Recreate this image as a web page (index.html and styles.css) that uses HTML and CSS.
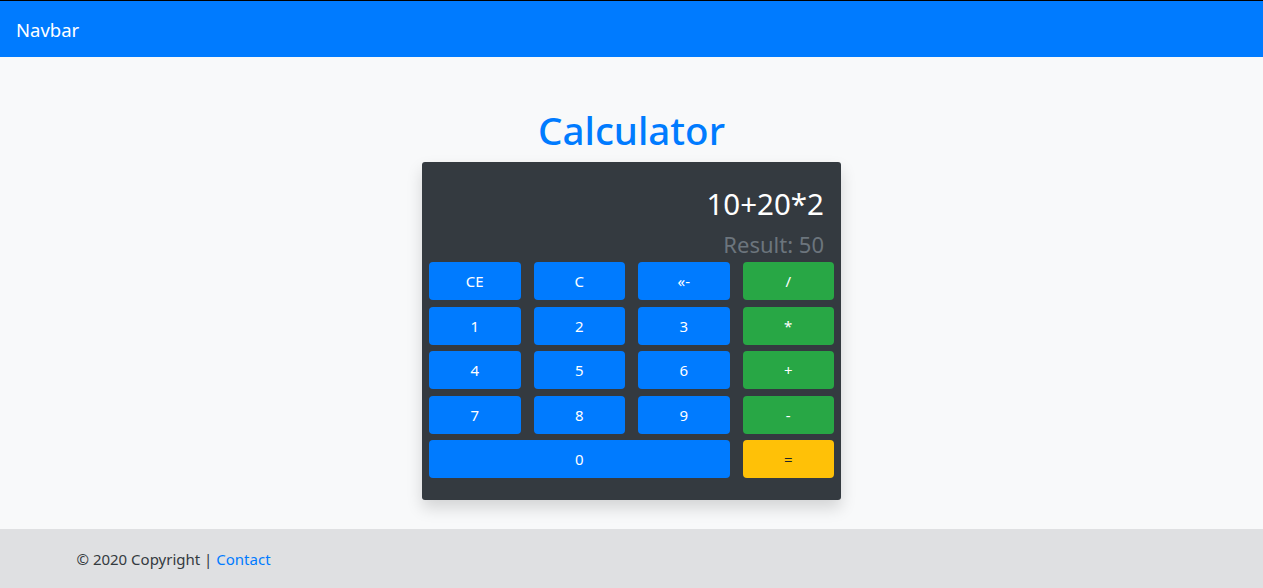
FILE: index.html
```html
<!DOCTYPE html>
<html lang="en">
<head>
<meta charset="utf-8">
<title>Calculator</title>
<link rel="stylesheet" href="styles.css">
</head>
<body>
<nav class="navbar"><span class="brand">Navbar</span></nav>
<main class="main">
  <h1 class="title">Calculator</h1>
  <div class="calc">
    <div class="display">
      <div class="expr">10+20*2</div>
      <div class="result">Result: 50</div>
    </div>
    <div class="keys">
      <button class="key blue">CE</button>
      <button class="key blue">C</button>
      <button class="key blue">«-</button>
      <button class="key green">/</button>
      <button class="key blue">1</button>
      <button class="key blue">2</button>
      <button class="key blue">3</button>
      <button class="key green">*</button>
      <button class="key blue">4</button>
      <button class="key blue">5</button>
      <button class="key blue">6</button>
      <button class="key green">+</button>
      <button class="key blue">7</button>
      <button class="key blue">8</button>
      <button class="key blue">9</button>
      <button class="key green">-</button>
      <button class="key blue zero">0</button>
      <button class="key yellow">=</button>
    </div>
  </div>
</main>
<footer class="footer">
  <div class="container">© 2020 Copyright | <a href="#" class="link">Contact</a></div>
</footer>
</body>
</html>
```
FILE: styles.css
```css
* { box-sizing: border-box; }
html, body { margin: 0; padding: 0; }
body {
  font-family: "Noto Sans", "Open Sans", sans-serif;
  font-size: 16px;
  color: #212529;
  background: #f8f9fa;
  border-top: 1px solid #000;
}
.navbar {
  height: 56px;
  background: #007bff;
  display: flex;
  align-items: center;
  padding: 0 16px;
}
.brand {
  color: #fff;
  font-size: 18.5px;
}
.main {
  padding: 49px 0 29px;
  display: flex;
  flex-direction: column;
  align-items: center;
}
.title {
  margin: 0 0 8px;
  font-size: 38.5px;
  line-height: 48px;
  font-weight: 500;
  color: #007bff;
}
.calc {
  width: 419px;
  height: 338px;
  background: #343a40;
  border-radius: 3px;
  box-shadow: 0 8px 16px rgba(0,0,0,0.15);
  padding: 0 7px 22px;
}
.display {
  height: 100px;
  text-align: right;
  padding: 18px 10px 0 0;
}
.expr {
  color: #fff;
  font-size: 29.5px;
  line-height: 48px;
}
.result {
  color: #6c757d;
  font-size: 22px;
  line-height: 32px;
}
.keys {
  display: grid;
  grid-template-columns: repeat(4, 1fr);
  column-gap: 13px;
  row-gap: 6.5px;
}
.key {
  height: 38px;
  border: 0;
  border-radius: 4px;
  font-family: inherit;
  font-size: 15px;
  color: #fff;
  padding: 0;
}
.blue { background: #007bff; }
.green { background: #28a745; }
.yellow { background: #ffc107; color: #212529; }
.zero { grid-column: span 3; }
.footer {
  background: #dfe0e2;
  height: 60px;
}
.container {
  max-width: 1140px;
  margin: 0 auto;
  padding: 0 15px;
  line-height: 60px;
  font-size: 15px;
  color: #343a40;
}
.link { color: #007bff; text-decoration: none; }
```
